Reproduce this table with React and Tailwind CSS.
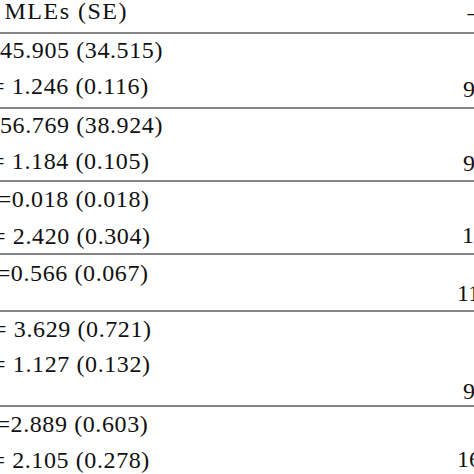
const rows = [
  {
    h: "h-[73px]",
    pt: "pt-[1px]",
    gap: "gap-[5px]",
    lines: [
      ["45.905 (34.515)", "ml-[0px]"],
      ["= 1.246 (0.116)", "-ml-[8.9px]"],
    ],
    value: "97.28",
    vpt: "pt-[39.5px]",
    vml: "ml-[23px]",
  },
  {
    h: "h-[71px]",
    pt: "pt-[1px]",
    gap: "gap-[5px]",
    lines: [
      ["56.769 (38.924)", "ml-[0px]"],
      ["= 1.184 (0.105)", "-ml-[8.9px]"],
    ],
    value: "95.63",
    vpt: "pt-[38.5px]",
    vml: "ml-[23px]",
  },
  {
    h: "h-[71px]",
    pt: "pt-[2px]",
    gap: "gap-[6px]",
    lines: [
      ["=0.018 (0.018)", "-ml-[2.3px]"],
      ["= 2.420 (0.304)", "-ml-[7.9px]"],
    ],
    value: "103.5",
    vpt: "pt-[38px]",
    vml: "ml-[22px]",
  },
  {
    h: "h-[55px]",
    pt: "pt-[2.5px]",
    gap: "gap-[5px]",
    lines: [["=0.566 (0.067)", "-ml-[3.3px]"]],
    value: "115.2",
    vpt: "pt-[23px]",
    vml: "ml-[17px]",
  },
  {
    h: "h-[93px]",
    pt: "pt-[2px]",
    gap: "gap-[4px]",
    lines: [
      ["= 3.629 (0.721)", "-ml-[6.9px]"],
      ["= 1.127 (0.132)", "-ml-[7.9px]"],
    ],
    value: "98.41",
    vpt: "pt-[63.5px]",
    vml: "ml-[23px]",
  },
  {
    h: "h-[80px]",
    pt: "pt-[2px]",
    gap: "gap-[5px]",
    lines: [
      ["=2.889 (0.603)", "-ml-[3.6px]"],
      ["= 2.105 (0.278)", "-ml-[8.6px]"],
    ],
    value: "160.7",
    vpt: "pt-[37px]",
    vml: "ml-[17px]",
  },
];

function Rule() {
  return <div className="h-[2px] bg-[#858585]" />;
}

export default function App() {
  return (
    <div className="w-[474px] h-[474px] overflow-hidden bg-white text-[#111] font-['Liberation_Serif','Times_New_Roman',serif] text-[24px]">
      <div className="w-[540px]">
        {/* header */}
        <div className="flex h-[32px]">
          <div className="w-[440px] pl-[4.5px] leading-[22px] tracking-[1.5px] whitespace-nowrap">
            MLEs (SE)
          </div>
          <div className="ml-[27.5px] leading-[24px] whitespace-nowrap">–log L</div>
        </div>
        <Rule />

        {rows.map((r, i) => (
          <div key={i}>
            <div className={`flex ${r.h}`}>
              <div className={`w-[440px] flex flex-col ${r.pt} ${r.gap}`}>
                {r.lines.map(([t, ml], j) => (
                  <div key={j} className={`${ml} leading-[31px] tracking-[0.6px] whitespace-nowrap`}>
                    {t}
                  </div>
                ))}
              </div>
              <div className={`${r.vpt} ${r.vml} leading-[31px] whitespace-nowrap`}>{r.value}</div>
            </div>
            {i < rows.length - 1 && <Rule />}
          </div>
        ))}
      </div>
    </div>
  );
}
